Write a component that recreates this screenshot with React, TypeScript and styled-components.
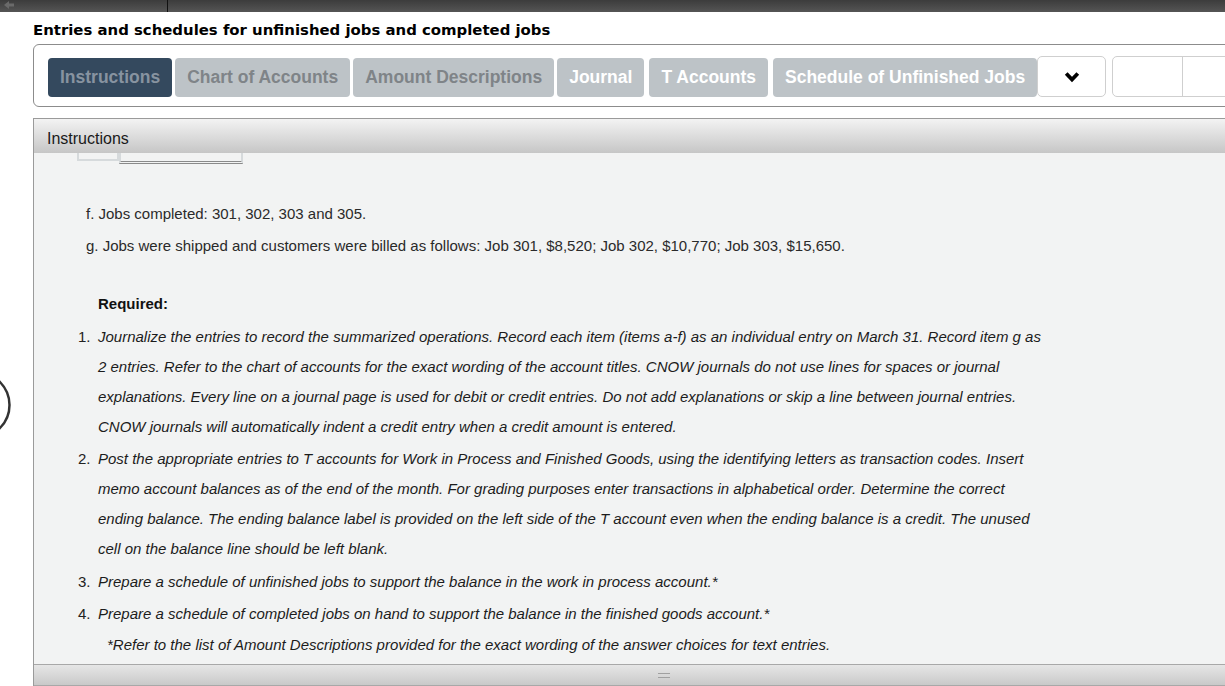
import React from "react";
import styled, { createGlobalStyle } from "styled-components";

const GlobalStyle = createGlobalStyle`
  html, body { margin: 0; padding: 0; background: #ffffff; overflow: hidden; }
  body { font-family: "Liberation Sans", Arial, sans-serif; }
`;

const Page = styled.div`
  width: 1225px;
  height: 686px;
  position: relative;
  overflow: hidden;
  background: #fff;
`;

const TopBar = styled.div`
  height: 12px;
  display: flex;
  align-items: stretch;
  background: linear-gradient(#3c3c3c, #555555);
`;

const TopBarLeft = styled.div`
  width: 167px;
  display: flex;
  align-items: flex-start;
  padding-left: 2px;
  box-sizing: border-box;
`;

const TopBarDivider = styled.div`
  width: 1px;
  background: #111;
`;

const Main = styled.div`
  padding-left: 33px;
`;

const Title = styled.h1`
  margin: 0;
  padding-top: 9px;
  font-family: "DejaVu Sans", Verdana, sans-serif;
  font-weight: bold;
  font-size: 14.9px;
  line-height: 18px;
  color: #000;
`;

const TabContainer = styled.div`
  margin-top: 5px;
  width: 1260px;
  box-sizing: border-box;
  border: 1px solid #8c8c8c;
  border-radius: 6px;
  padding: 11px 0 9px 14px;
  display: flex;
  align-items: flex-end;
`;

const Tab = styled.div<{ $active?: boolean; $light?: boolean; $gap?: number }>`
  height: 39px;
  display: flex;
  align-items: center;
  padding: 0 12px;
  margin-right: ${(p) => p.$gap ?? 3}px;
  border-radius: 4px;
  font-family: "Liberation Sans", Arial, sans-serif;
  font-weight: bold;
  font-size: 17.5px;
  white-space: nowrap;
  background: ${(p) => (p.$active ? "#34495e" : "#bdc3c7")};
  color: ${(p) => (p.$active ? "#8793a0" : p.$light ? "#ffffff" : "#7f8488")};
`;

const DropButton = styled.div`
  width: 69px;
  height: 41px;
  box-sizing: border-box;
  border: 1px solid #cfcfcf;
  border-radius: 5px;
  background: #fff;
  display: flex;
  align-items: center;
  justify-content: center;
`;

const EmptyBox = styled.div`
  margin-left: 6px;
  height: 41px;
  width: 140px;
  box-sizing: border-box;
  border: 1px solid #cfcfcf;
  border-radius: 5px;
  background: #fff;
  display: flex;
`;

const EmptyCell = styled.div`
  width: 69px;
  border-right: 1px solid #cfcfcf;
`;

const Panel = styled.div`
  margin-top: 11px;
  width: 1260px;
  border: 1px solid #9a9a9a;
  border-right: none;
  box-sizing: border-box;
`;

const PanelHeader = styled.div`
  height: 34px;
  box-sizing: border-box;
  display: flex;
  align-items: flex-end;
  padding: 0 0 5px 13px;
  background: linear-gradient(#f3f3f3, #c6c6c6);
  font-family: "Liberation Sans", Arial, sans-serif;
  font-size: 16px;
  line-height: 18px;
  color: #1a1a1a;
`;

const PanelBody = styled.div`
  background: #f2f3f3;
  padding-bottom: 4px;
  font-family: "Liberation Sans", Arial, sans-serif;
  font-size: 15px;
  line-height: 30px;
  color: #2a2a2a;
`;

const Remnant = styled.div`
  display: flex;
  margin-left: 43px;
  height: 11px;
`;

const RemnantCell = styled.div<{ $w: number; $double?: boolean }>`
  width: ${(p) => p.$w}px;
  box-sizing: border-box;
  border-left: 2px solid #d6dadc;
  border-right: 2px solid #d6dadc;
  border-bottom: ${(p) => (p.$double ? "3px double #8a8a8a" : "2px solid #d6dadc")};
  height: ${(p) => (p.$double ? 11 : 8)}px;
`;

const Para = styled.p<{ $top: number; $left: number }>`
  margin: ${(p) => p.$top}px 0 0 ${(p) => p.$left}px;
`;

const Required = styled.p`
  margin: 28px 0 0 64px;
  font-weight: bold;
  color: #111;
`;

const List = styled.div`
  margin-left: 44px;
`;

const Item = styled.div<{ $top: number }>`
  display: grid;
  grid-template-columns: 20px 1fr;
  margin-top: ${(p) => p.$top}px;
`;

const Num = styled.span`
  color: #222;
`;

const ItemText = styled.span`
  font-style: italic;
  color: #1c1c1c;
  white-space: nowrap;
`;

const Footnote = styled.p`
  margin: 1px 0 0 73px;
  font-style: italic;
  color: #1c1c1c;
`;

const BottomBar = styled.div`
  height: 20px;
  border-top: 1px solid #a8a8a8;
  border-bottom: 1px solid #a8a8a8;
  background: linear-gradient(#e6e6e6, #c9c9c9);
  display: flex;
  justify-content: center;
  align-items: center;
`;

const Grip = styled.div`
  width: 12px;
  height: 3px;
  border-top: 1px solid #a0a0a0;
  border-bottom: 1px solid #a0a0a0;
`;

const SideCircle = styled.svg`
  position: absolute;
  left: 0;
  top: 370px;
`;

const lines1 = [
  "Journalize the entries to record the summarized operations. Record each item (items a-f) as an individual entry on March 31. Record item g as",
  "2 entries. Refer to the chart of accounts for the exact wording of the account titles. CNOW journals do not use lines for spaces or journal",
  "explanations. Every line on a journal page is used for debit or credit entries. Do not add explanations or skip a line between journal entries.",
  "CNOW journals will automatically indent a credit entry when a credit amount is entered.",
];

const lines2 = [
  "Post the appropriate entries to T accounts for Work in Process and Finished Goods, using the identifying letters as transaction codes. Insert",
  "memo account balances as of the end of the month. For grading purposes enter transactions in alphabetical order. Determine the correct",
  "ending balance. The ending balance label is provided on the left side of the T account even when the ending balance is a credit. The unused",
  "cell on the balance line should be left blank.",
];

const Lines: React.FC<{ lines: string[] }> = ({ lines }) => (
  <ItemText>
    {lines.map((l, i) => (
      <React.Fragment key={i}>
        {l}
        {i < lines.length - 1 && <br />}
      </React.Fragment>
    ))}
  </ItemText>
);

export default function App() {
  return (
    <Page>
      <GlobalStyle />
      <TopBar>
        <TopBarLeft>
          <svg width="14" height="10" viewBox="0 0 14 10">
            <path d="M2 5 L7 1 L7 3.5 L12 3.5 L12 6.5 L7 6.5 L7 9 Z" fill="#6a6a6a" />
          </svg>
        </TopBarLeft>
        <TopBarDivider />
      </TopBar>
      <Main>
        <Title>Entries and schedules for unfinished jobs and completed jobs</Title>
        <TabContainer>
          <Tab $active>Instructions</Tab>
          <Tab>Chart of Accounts</Tab>
          <Tab>Amount Descriptions</Tab>
          <Tab $light $gap={5}>Journal</Tab>
          <Tab $light $gap={5}>T Accounts</Tab>
          <Tab $light $gap={0}>Schedule of Unfinished Jobs</Tab>
          <DropButton>
            <svg width="16" height="12" viewBox="0 0 16 12">
              <polyline points="2.2,2.5 8,8.5 13.8,2.5" fill="none" stroke="#000" strokeWidth="3.8" strokeLinejoin="miter" />
            </svg>
          </DropButton>
          <EmptyBox>
            <EmptyCell />
          </EmptyBox>
        </TabContainer>
        <Panel>
          <PanelHeader>Instructions</PanelHeader>
          <PanelBody>
            <Remnant>
              <RemnantCell $w={42} />
              <RemnantCell $w={124} $double />
            </Remnant>
            <Para $top={35} $left={52}>f. Jobs completed: 301, 302, 303 and 305.</Para>
            <Para $top={2} $left={52}>
              g. Jobs were shipped and customers were billed as follows: Job 301, $8,520; Job 302, $10,770; Job 303, $15,650.
            </Para>
            <Required>Required:</Required>
            <List>
              <Item $top={3}>
                <Num>1.</Num>
                <Lines lines={lines1} />
              </Item>
              <Item $top={2}>
                <Num>2.</Num>
                <Lines lines={lines2} />
              </Item>
              <Item $top={3}>
                <Num>3.</Num>
                <ItemText>Prepare a schedule of unfinished jobs to support the balance in the work in process account.*</ItemText>
              </Item>
              <Item $top={2}>
                <Num>4.</Num>
                <ItemText>Prepare a schedule of completed jobs on hand to support the balance in the finished goods account.*</ItemText>
              </Item>
            </List>
            <Footnote>*Refer to the list of Amount Descriptions provided for the exact wording of the answer choices for text entries.</Footnote>
          </PanelBody>
          <BottomBar>
            <Grip />
          </BottomBar>
        </Panel>
      </Main>
      <SideCircle width="20" height="70" viewBox="0 0 20 70">
        <circle cx="-23" cy="35" r="32.5" fill="none" stroke="#333" strokeWidth="2.5" />
      </SideCircle>
    </Page>
  );
}
